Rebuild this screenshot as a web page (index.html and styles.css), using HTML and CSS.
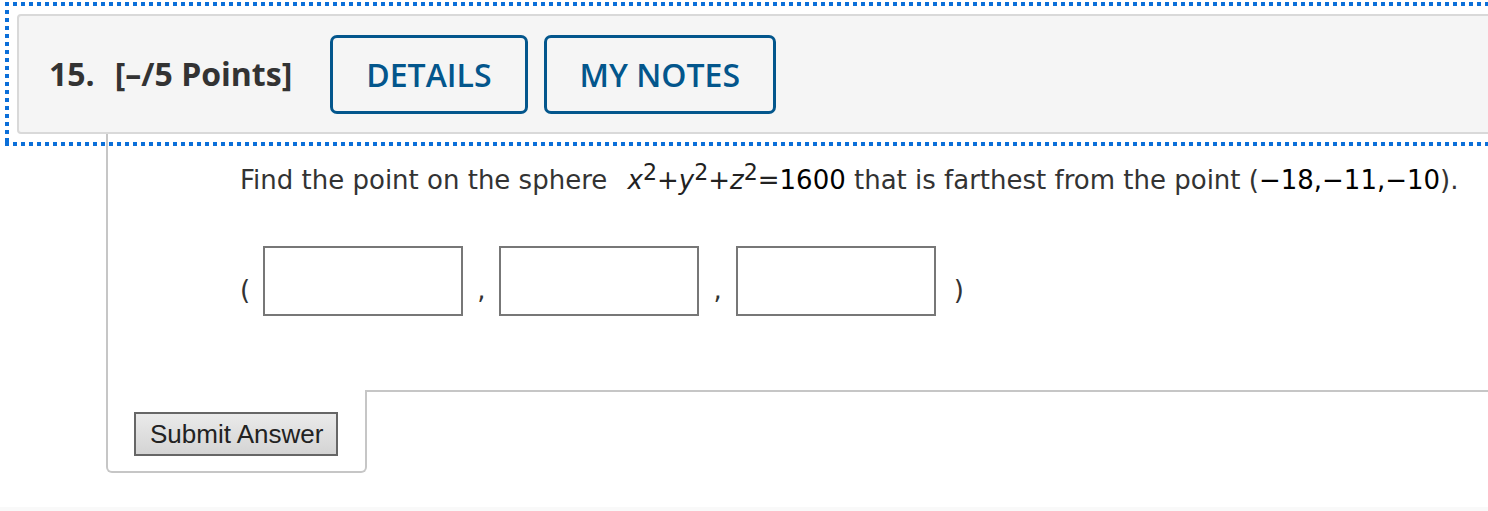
FILE: index.html
```html
<!DOCTYPE html>
<html lang="en">
<head>
<meta charset="utf-8">
<title>Question 15</title>
<link rel="stylesheet" href="styles.css">
</head>
<body>
<div class="page">
  <div class="q-header">
    <span class="q-num">15.</span>
    <span class="q-points">[–/5 Points]</span>
    <button class="q-btn q-btn-details">DETAILS</button>
    <button class="q-btn">MY NOTES</button>
  </div>
  <div class="q-body">
    <p class="prompt">Find the point on the sphere <span class="math math-eq"><i>x</i><sup>2</sup>+<i>y</i><sup>2</sup>+<i>z</i><sup>2</sup>=<span class="num">1600</span></span> that is farthest from the point (<span class="math num">−18,−11,−10</span>).</p>
    <div class="answer">
      <span class="sep sep-open">(</span>
      <input class="ans" type="text" aria-label="x">
      <span class="sep sep-comma">,</span>
      <input class="ans" type="text" aria-label="y">
      <span class="sep sep-comma">,</span>
      <input class="ans" type="text" aria-label="z">
      <span class="sep sep-close">)</span>
    </div>
  </div>
  <div class="q-footer">
    <div class="submit-tab"><button class="submit">Submit Answer</button></div>
    <div class="footer-rule"></div>
  </div>
  <div class="next-card"></div>
</div>
</body>
</html>
```
FILE: styles.css
```css
html, body {
  margin: 0;
  padding: 0;
  background: #ffffff;
  overflow: hidden;
}

.page {
  width: 1488px;
  height: 511px;
  overflow: hidden;
}

.q-header {
  position: relative;
  box-sizing: border-box;
  margin: 14px -40px 0 17px;
  height: 120px;
  background: #f5f5f5;
  border: 2px solid #d9d9d9;
  border-radius: 4px;
  display: flex;
  align-items: center;
  padding: 0 0 2px 30px;
  font-family: "Open Sans", "Liberation Sans", sans-serif;
  color: #333333;
}

.q-header::after {
  content: "";
  position: absolute;
  inset: -14px;
  pointer-events: none;
  background:
    repeating-linear-gradient(90deg, #0b6fd9 0 4px, transparent 4px 8px) left top / 100% 4px no-repeat,
    repeating-linear-gradient(90deg, #0b6fd9 0 4px, transparent 4px 8px) left bottom / 100% 4px no-repeat,
    repeating-linear-gradient(180deg, #0b6fd9 0 4px, transparent 4px 8px) left top / 4px 100% no-repeat;
}

.q-num {
  font-size: 32px;
  font-weight: 700;
  margin-right: 20px;
}

.q-points {
  font-size: 32px;
  font-weight: 700;
}

.q-btn {
  box-sizing: border-box;
  height: 79px;
  padding: 0 33px;
  margin: 2px 0 0 16px;
  background: transparent;
  border: 3px solid #03568c;
  border-radius: 7px;
  color: #03568c;
  font-family: "Open Sans", "Liberation Sans", sans-serif;
  font-size: 32px;
  font-weight: 600;
  cursor: pointer;
}

.q-btn-details {
  margin-left: 38px;
}

.q-body {
  margin-left: 106px;
  border-left: 2px solid #c6c6c6;
  padding: 31px 0 74px 132px;
  font-family: "DejaVu Sans", Verdana, sans-serif;
  font-size: 26px;
  color: #333333;
}

.prompt {
  margin: 0;
  line-height: 30px;
  white-space: nowrap;
}

.math {
  color: #222222;
}

.math i {
  font-style: italic;
}

.math-eq {
  margin-left: 12px;
}

.math sup {
  font-size: 0.85em;
  line-height: 0;
  vertical-align: 0.4em;
}

.num {
  color: #000000;
}

.answer {
  margin-top: 51px;
  display: flex;
  align-items: flex-end;
}

.sep {
  line-height: 30px;
  padding-bottom: 11px;
}

.sep-open {
  margin-right: 13px;
}

.sep-comma {
  margin: 0 14px;
}

.sep-close {
  margin-left: 18px;
}

.ans {
  box-sizing: border-box;
  width: 200px;
  height: 70px;
  margin: 0;
  padding: 0 8px;
  border: 2px solid #777777;
  border-radius: 0;
  background: #ffffff;
  font-family: "DejaVu Sans", sans-serif;
  font-size: 20px;
}

.q-footer {
  margin-left: 106px;
  display: flex;
}

.submit-tab {
  border: 2px solid #c6c6c6;
  border-top: none;
  border-radius: 0 0 6px 6px;
  padding: 22px 27px 15px 26px;
}

.submit {
  box-sizing: border-box;
  height: 44px;
  padding: 0 13px 0 14px;
  margin: 0;
  border: 2px solid #666666;
  border-radius: 0;
  background: linear-gradient(#eaeaea, #d4d4d4);
  color: #222222;
  font-family: "Liberation Sans", Arial, sans-serif;
  font-size: 26px;
  cursor: pointer;
}

.footer-rule {
  flex: 1;
  border-top: 2px solid #c6c6c6;
}

.next-card {
  margin-top: 34px;
  height: 20px;
  background: #f9f9f9;
}
```
